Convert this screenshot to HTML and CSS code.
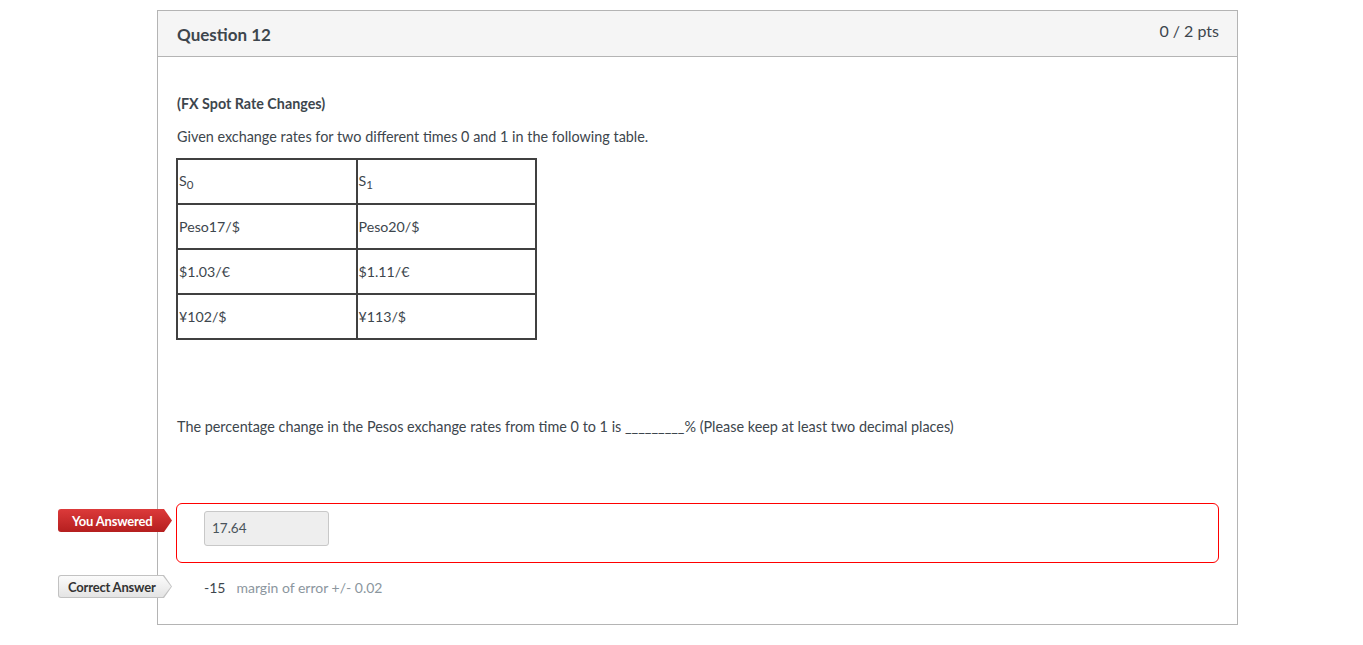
FILE: index.html
```html
<!DOCTYPE html>
<html lang="en">
<head>
<meta charset="utf-8">
<title>Question 12</title>
<link rel="stylesheet" href="styles.css">
</head>
<body>
<div class="question">
  <div class="q-header">
    <h2 class="q-title">Question 12</h2>
    <div class="q-pts">0 / 2 pts</div>
  </div>
  <div class="q-body">
    <p class="q-sub">(FX Spot Rate Changes)</p>
    <p class="q-text">Given exchange rates for two different times 0 and 1 in the following table.</p>
    <table class="rates">
      <tr><td>S<sub>0</sub></td><td>S<sub>1</sub></td></tr>
      <tr><td>Peso17/$</td><td>Peso20/$</td></tr>
      <tr><td>$1.03/€</td><td>$1.11/€</td></tr>
      <tr><td>¥102/$</td><td>¥113/$</td></tr>
    </table>
    <p class="q-ask">The percentage change in the Pesos exchange rates from time 0 to 1 is _________% (Please keep at least two decimal places)</p>
    <div class="answer wrong">
      <span class="tag tag-wrong">You Answered</span>
      <div class="answer-input">17.64</div>
    </div>
    <div class="answer correct">
      <span class="tag tag-correct"><span class="tag-label">Correct Answer</span></span>
      <span class="ans-val">-15</span>
      <span class="ans-margin">margin of error +/- 0.02</span>
    </div>
  </div>
</div>
</body>
</html>
```
FILE: styles.css
```css
* { box-sizing: border-box; }
body {
  margin: 0;
  background: #fff;
  font-family: Lato, "Open Sans", sans-serif;
  color: #2d3b45;
}
.question {
  margin: 10px 0 0 157px;
  width: 1081px;
  border: 1px solid #b4b4b4;
}
.q-header {
  display: flex;
  justify-content: space-between;
  align-items: flex-start;
  height: 46px;
  background: #f5f5f5;
  border-bottom: 1px solid #b4b4b4;
  padding: 0 18px 0 19px;
}
.q-title {
  margin: 0;
  font-size: 17px;
  font-weight: 700;
  line-height: 20px;
  padding-top: 14px;
  color: #3d464d;
}
.q-pts {
  font-size: 16px;
  line-height: 20px;
  padding-top: 10px;
  color: #3d464d;
}
.q-body {
  padding: 37px 18px 26px 19px;
}
.q-sub {
  margin: 0;
  font-size: 14.3px;
  font-weight: 700;
  line-height: 20px;
  color: #3d464d;
}
.q-text {
  margin: 13px 0 0;
  font-size: 14.4px;
  line-height: 20px;
  color: #3d464d;
}
.rates {
  margin: 11px 0 0 -1px;
  border-collapse: collapse;
  width: 361px;
  font-size: 14.2px;
}
.rates td {
  border: 2px solid #404040;
  height: 45px;
  padding: 0 0 0 1px;
  width: 50%;
  vertical-align: middle;
  color: #3d464d;
}
.rates sub {
  font-size: 11.5px;
  vertical-align: -3px;
}
.q-ask {
  margin: 77px 0 0;
  font-size: 14.4px;
  line-height: 20px;
  color: #3d464d;
}
.answer {
  position: relative;
}
.answer.wrong {
  margin: 66px 0 0 -1px;
  height: 60px;
  border: 1px solid #ff0000;
  border-radius: 6px;
  padding: 7px 0 0 27px;
}
.answer-input {
  width: 125px;
  height: 35px;
  background: #eeeeee;
  border: 1px solid #c8c8c8;
  border-radius: 3px;
  font-size: 13.5px;
  line-height: 33px;
  padding-left: 7px;
  color: #4a545b;
}
.tag {
  position: absolute;
  display: flex;
  align-items: center;
  height: 23px;
  width: 114px;
  font-size: 13px;
  font-weight: 700;
  letter-spacing: -0.2px;
  border-radius: 3px 0 0 3px;
  clip-path: polygon(0 0, calc(100% - 8px) 0, 100% 50%, calc(100% - 8px) 100%, 0 100%);
}
.tag-wrong {
  left: -119px;
  top: 5px;
  padding-left: 14px;
  color: #fff;
  background: linear-gradient(#dc3a3a, #b51f1f);
}
.tag-correct {
  top: -1px;
  background: #c2c2c2;
}
.tag-correct::before {
  content: "";
  position: absolute;
  inset: 1px;
  border-radius: 2px 0 0 2px;
  background: linear-gradient(#fbfbfb, #e4e4e4);
  clip-path: polygon(0 0, calc(100% - 8px) 0, 100% 50%, calc(100% - 8px) 100%, 0 100%);
}
.tag-label {
  position: relative;
  padding-left: 10px;
  color: #333;
}
.answer.correct {
  margin: 13px 0 0 27px;
  display: flex;
  align-items: center;
  height: 22px;
  font-size: 14px;
}
.answer.correct .tag {
  left: -146px;
}
.ans-val {
  color: #3d464d;
}
.ans-margin {
  margin-left: 11px;
  color: #8b969e;
}
```
